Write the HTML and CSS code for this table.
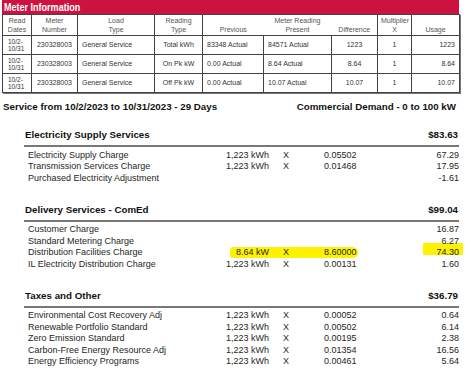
FILE: index.html
```html
<!DOCTYPE html>
<html>
<head>
<meta charset="utf-8">
<link rel="stylesheet" href="styles.css">
</head>
<body>
<div class="meter">
  <div class="bar"><span class="bar-title">Meter Information</span></div>
  <table class="mt">
    <colgroup>
      <col class="c1"><col class="c2"><col class="c3"><col class="c4"><col class="c5"><col class="c6"><col class="c7"><col class="c8"><col class="c9">
    </colgroup>
    <tr class="hd">
      <th>Read<br>Dates</th>
      <th>Meter<br>Number</th>
      <th>Load<br>Type</th>
      <th>Reading<br>Type</th>
      <th>Previous</th>
      <th class="nl">Meter Reading<br>Present</th>
      <th class="nl">Difference</th>
      <th>Multiplier<br>X</th>
      <th>Usage</th>
    </tr>
    <tr>
      <td class="dt">10/2-<br>10/31</td><td class="ctr">230328003</td><td>General Service</td><td class="ctr">Total kWh</td><td>83348 Actual</td><td>84571 Actual</td><td class="ctr">1223</td><td class="ctr">1</td><td class="rt">1223</td>
    </tr>
    <tr>
      <td class="dt">10/2-<br>10/31</td><td class="ctr">230328003</td><td>General Service</td><td class="ctr">On Pk kW</td><td>0.00 Actual</td><td>8.64 Actual</td><td class="ctr">8.64</td><td class="ctr">1</td><td class="rt">8.64</td>
    </tr>
    <tr>
      <td class="dt">10/2-<br>10/31</td><td class="ctr">230328003</td><td>General Service</td><td class="ctr">Off Pk kW</td><td>0.00 Actual</td><td>10.07 Actual</td><td class="ctr">10.07</td><td class="ctr">1</td><td class="rt">10.07</td>
    </tr>
  </table>
</div>

<div class="service">
  <span>Service from 10/2/2023 to 10/31/2023 - 29 Days</span>
  <span>Commercial Demand - 0 to 100 kW</span>
</div>

<section class="sec">
  <div class="sec-head"><span>Electricity Supply Services</span><span class="total">$83.63</span></div>
  <div class="rows">
    <div class="row"><span>Electricity Supply Charge</span><span class="qty">1,223 kWh</span><span class="x">X</span><span class="rate">0.05502</span><span class="amt">67.29</span></div>
    <div class="row"><span>Transmission Services Charge</span><span class="qty">1,223 kWh</span><span class="x">X</span><span class="rate">0.01468</span><span class="amt">17.95</span></div>
    <div class="row"><span>Purchased Electricity Adjustment</span><span class="qty"></span><span class="x"></span><span class="rate"></span><span class="amt">-1.61</span></div>
  </div>
</section>

<section class="sec">
  <div class="sec-head"><span>Delivery Services - ComEd</span><span class="total">$99.04</span></div>
  <div class="rows">
    <div class="row"><span>Customer Charge</span><span class="qty"></span><span class="x"></span><span class="rate"></span><span class="amt">16.87</span></div>
    <div class="row"><span>Standard Metering Charge</span><span class="qty"></span><span class="x"></span><span class="rate"></span><span class="amt">6.27</span></div>
    <div class="row marked"><span>Distribution Facilities Charge</span><span class="qty">8.64 kW</span><span class="x">X</span><span class="rate">8.60000</span><span class="amt">74.30</span><i class="hl hl-a"></i><i class="hl hl-b"></i></div>
    <div class="row"><span>IL Electricity Distribution Charge</span><span class="qty">1,223 kWh</span><span class="x">X</span><span class="rate">0.00131</span><span class="amt">1.60</span></div>
  </div>
</section>

<section class="sec">
  <div class="sec-head"><span>Taxes and Other</span><span class="total">$36.79</span></div>
  <div class="rows">
    <div class="row"><span>Environmental Cost Recovery Adj</span><span class="qty">1,223 kWh</span><span class="x">X</span><span class="rate">0.00052</span><span class="amt">0.64</span></div>
    <div class="row"><span>Renewable Portfolio Standard</span><span class="qty">1,223 kWh</span><span class="x">X</span><span class="rate">0.00502</span><span class="amt">6.14</span></div>
    <div class="row"><span>Zero Emission Standard</span><span class="qty">1,223 kWh</span><span class="x">X</span><span class="rate">0.00195</span><span class="amt">2.38</span></div>
    <div class="row"><span>Carbon-Free Energy Resource Adj</span><span class="qty">1,223 kWh</span><span class="x">X</span><span class="rate">0.01354</span><span class="amt">16.56</span></div>
    <div class="row"><span>Energy Efficiency Programs</span><span class="qty">1,223 kWh</span><span class="x">X</span><span class="rate">0.00461</span><span class="amt">5.64</span></div>
  </div>
</section>
</body>
</html>
```

FILE: styles.css
```css
body {
  margin: 0;
  background: #fff;
  color: #222;
  font-family: "Liberation Sans", Arial, sans-serif;
}

.meter {
  margin-left: 2px;
  width: 457px;
}

.bar {
  height: 14px;
  background: #cc1241;
  color: #fff;
  font: bold 11px/14px "Liberation Sans", Arial, sans-serif;
  padding-left: 2px;
}

.bar-title {
  display: inline-block;
  transform: scaleX(0.82);
  transform-origin: left center;
}

.mt {
  border-collapse: collapse;
  table-layout: fixed;
  width: 457px;
  font-size: 7px;
  color: #333;
  box-shadow: 1px 1px 0 #777;
}

.c1 { width: 29px; }
.c2 { width: 46px; }
.c3 { width: 77px; }
.c4 { width: 48px; }
.c5 { width: 61px; }
.c6 { width: 68px; }
.c7 { width: 46px; }
.c8 { width: 34px; }
.c9 { width: 48px; }

.mt th,
.mt td {
  border: 1px solid #444;
  padding: 0 3px;
  white-space: nowrap;
  overflow: hidden;
}

.mt th {
  font-weight: normal;
  color: #555;
  vertical-align: bottom;
  line-height: 9px;
  height: 19px;
  padding-bottom: 1px;
  text-align: center;
}

.mt th.nl {
  border-left: hidden;
}

.mt td {
  height: 18px;
  line-height: 7.5px;
  vertical-align: middle;
  padding-left: 4px;
}

.mt td.dt {
  padding-left: 5px;
  font-size: 6.5px;
}

.mt td.ctr { text-align: center; padding: 0; }
.mt td.rt { text-align: right; padding-right: 4px; }

.service {
  display: flex;
  justify-content: space-between;
  margin: 7px 18px 0 3px;
  font-weight: bold;
  font-size: 9.75px;
  line-height: 14px;
  color: #111;
}

.sec {
  margin: 18.5px 15px 0 24px;
}

.service + .sec {
  margin-top: 14px;
}

.sec-head {
  display: flex;
  justify-content: space-between;
  font-weight: bold;
  font-size: 9.75px;
  line-height: 14px;
  color: #111;
  padding: 0 1px 3px 1px;
  border-bottom: 2px solid #777;
}

.rows {
  padding: 2.5px 0 0 4px;
}

.row {
  position: relative;
  display: grid;
  grid-template-columns: 190px 51px 55px 40px 1fr;
  font-size: 9px;
  line-height: 11.5px;
  color: #262626;
  white-space: nowrap;
}

.row > span {
  position: relative;
  z-index: 1;
}

.qty { text-align: right; }
.x { padding-left: 14px; }
.amt { text-align: right; }

.hl {
  position: absolute;
  background: #fff200;
  z-index: 0;
}

.hl-a {
  left: 202px;
  width: 128px;
  top: 0;
  height: 11px;
  border-radius: 4px 6px 5px 3px;
}

.hl-b {
  left: 395px;
  width: 40px;
  top: -4px;
  height: 12px;
  border-radius: 1px;
}
```
